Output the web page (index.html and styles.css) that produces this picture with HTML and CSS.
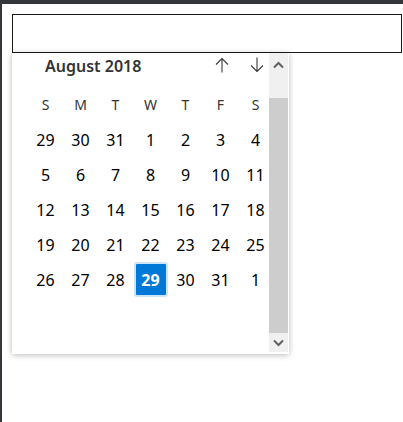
FILE: index.html
```html
<!DOCTYPE html>
<html lang="en">
<head>
    <meta charset="UTF-8">
    <meta name="viewport" content="width=device-width, initial-scale=1.0">
    <title>Date Picker</title>
    <link rel="stylesheet" href="styles.css">
</head>
<body>

    <div class="page">
        <!-- Date input -->
        <div class="date-field"></div>

        <!-- Calendar dropdown -->
        <div class="picker">
            <div class="calendar">
                <div class="cal-header">
                    <span class="cal-title">August 2018</span>
                    <div class="cal-nav">
                        <svg width="14" height="16" viewBox="0 0 14 16">
                            <path d="M7 15.5V1M1 7.5L7 1.5L13 7.5" fill="none" stroke="#3a3a3a" stroke-width="1.1"/>
                        </svg>
                        <svg width="14" height="16" viewBox="0 0 14 16">
                            <path d="M7 0.5V15M1 8.5L7 14.5L13 8.5" fill="none" stroke="#3a3a3a" stroke-width="1.1"/>
                        </svg>
                    </div>
                </div>

                <div class="cal-grid">
                    <span class="dow">S</span>
                    <span class="dow">M</span>
                    <span class="dow">T</span>
                    <span class="dow">W</span>
                    <span class="dow">T</span>
                    <span class="dow">F</span>
                    <span class="dow">S</span>

                    <span class="day">29</span>
                    <span class="day">30</span>
                    <span class="day">31</span>
                    <span class="day">1</span>
                    <span class="day">2</span>
                    <span class="day">3</span>
                    <span class="day">4</span>

                    <span class="day">5</span>
                    <span class="day">6</span>
                    <span class="day">7</span>
                    <span class="day">8</span>
                    <span class="day">9</span>
                    <span class="day">10</span>
                    <span class="day">11</span>

                    <span class="day">12</span>
                    <span class="day">13</span>
                    <span class="day">14</span>
                    <span class="day">15</span>
                    <span class="day">16</span>
                    <span class="day">17</span>
                    <span class="day">18</span>

                    <span class="day">19</span>
                    <span class="day">20</span>
                    <span class="day">21</span>
                    <span class="day">22</span>
                    <span class="day">23</span>
                    <span class="day">24</span>
                    <span class="day">25</span>

                    <span class="day">26</span>
                    <span class="day">27</span>
                    <span class="day">28</span>
                    <span class="day selected"><b>29</b></span>
                    <span class="day">30</span>
                    <span class="day">31</span>
                    <span class="day">1</span>
                </div>
            </div>

            <!-- Scrollbar -->
            <div class="scrollbar">
                <div class="sb-top">
                    <svg width="11" height="8" viewBox="0 0 11 8">
                        <path d="M1 6.5L5.5 2L10 6.5" fill="none" stroke="#606060" stroke-width="2"/>
                    </svg>
                </div>
                <div class="sb-thumb"></div>
                <div class="sb-bottom">
                    <svg width="11" height="8" viewBox="0 0 11 8">
                        <path d="M1 1.5L5.5 6L10 1.5" fill="none" stroke="#606060" stroke-width="2"/>
                    </svg>
                </div>
            </div>
        </div>
    </div>

</body>
</html>
```

FILE: styles.css
```css
/* Reset default styles */
* {
    margin: 0;
    padding: 0;
    box-sizing: border-box;
}

/* Window frame */
body {
    height: 422px;
    overflow: hidden;
    background-color: #fff;
    border-top: 4px solid #33363b;
    border-left: 2px solid #33363b;
    font-family: "Noto Sans", "Open Sans", sans-serif;
}

.page {
    padding: 10px 0 0 10px;
}

/* Date input */
.date-field {
    width: 390px;
    height: 39px;
    border: 1px solid #1a1a1a;
}

/* Dropdown */
.picker {
    width: 277px;
    height: 301px;
    display: flex;
    background-color: #fff;
    padding: 0 1px 2px 0;
    box-shadow: 0 1px 6px rgba(0,0,0,0.28);
}

.calendar {
    flex: 1;
    min-width: 0;
}

/* Month header */
.cal-header {
    height: 26px;
    display: flex;
    align-items: center;
    padding: 0 5px 0 33px;
}

.cal-title {
    font-size: 16px;
    font-weight: 600;
    color: #333;
}

.cal-nav {
    margin-left: auto;
    display: flex;
    gap: 21px;
    margin-top: -3px;
}

.cal-nav svg {
    display: block;
}

/* Day grid */
.cal-grid {
    margin: 8px 0 0 16px;
    display: grid;
    grid-template-columns: repeat(7, 35px);
    grid-auto-rows: 35px;
}

.dow,
.day {
    display: flex;
    justify-content: center;
    align-items: center;
}

.dow {
    font-size: 14px;
    color: #333;
}

.day {
    font-size: 16px;
    color: #000;
}

.day.selected b {
    width: 34px;
    height: 35px;
    display: flex;
    justify-content: center;
    align-items: center;
    background-color: #0078d7;
    border: 2px solid #cce4f7;
    border-radius: 3px;
    color: #fff;
    font-weight: bold;
}

/* Scrollbar */
.scrollbar {
    width: 19px;
    display: flex;
    flex-direction: column;
    background-color: #f0f0f0;
}

.sb-top {
    height: 45px;
    display: flex;
    justify-content: center;
    padding-top: 8px;
}

.sb-thumb {
    flex: 1;
    background-color: #cdcdcd;
}

.sb-bottom {
    height: 19px;
    display: flex;
    justify-content: center;
    align-items: center;
}
```
